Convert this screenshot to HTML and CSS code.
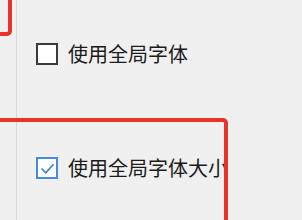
FILE: index.html
```html
<!DOCTYPE html>
<html lang="zh-CN">
<head>
    <meta charset="UTF-8">
    <meta name="viewport" content="width=device-width, initial-scale=1.0">
    <title>字体设置</title>
    <link rel="stylesheet" href="styles.css">
</head>
<body>
    <div class="panel">
        <div class="gutter"></div>
        <div class="options">
            <label class="option">
                <span class="box"></span>
                <span class="caption">使用全局字体</span>
            </label>
            <label class="option">
                <span class="box checked">
                    <svg viewBox="0 0 20 20" width="17" height="17">
                        <polyline points="3,10 8,15 17,5" fill="none" stroke="#3b7fd8" stroke-width="2"/>
                    </svg>
                </span>
                <span class="caption">使用全局字体大小</span>
            </label>
        </div>
        <!-- annotation boxes -->
        <div class="mark mark-font"></div>
        <div class="mark mark-size"></div>
    </div>
</body>
</html>
```

FILE: styles.css
```css
html, body {
    margin: 0;
    padding: 0;
    background: #f0f0f0;
}
.panel {
    position: relative;
    width: 302px;
    height: 220px;
    overflow: hidden;
    display: flex;
    font-family: "Noto Sans CJK SC", "Noto Sans", sans-serif;
    color: #1b1b1b;
}
.gutter {
    width: 16px;
    border-right: 1px solid #d9d9d9;
}
.options {
    display: flex;
    flex-direction: column;
    gap: 92px;
    padding: 43px 0 0 19px;
}
.option {
    display: flex;
    align-items: center;
    gap: 10px;
    height: 22px;
}
.box {
    box-sizing: border-box;
    width: 22px;
    height: 22px;
    border: 2px solid #3a3a3a;
    background: #fff;
    display: flex;
    align-items: center;
    justify-content: center;
}
.box.checked {
    border-color: #4a88d8;
}
.caption {
    font-size: 20px;
    line-height: 22px;
    white-space: nowrap;
}
.mark {
    position: absolute;
    box-sizing: border-box;
    border: 4px solid #e8322a;
    border-radius: 5px;
}
.mark-font {
    left: -10px;
    top: -10px;
    width: 22px;
    height: 46px;
}
.mark-size {
    left: -10px;
    top: 118px;
    width: 238px;
    height: 200px;
}
```
